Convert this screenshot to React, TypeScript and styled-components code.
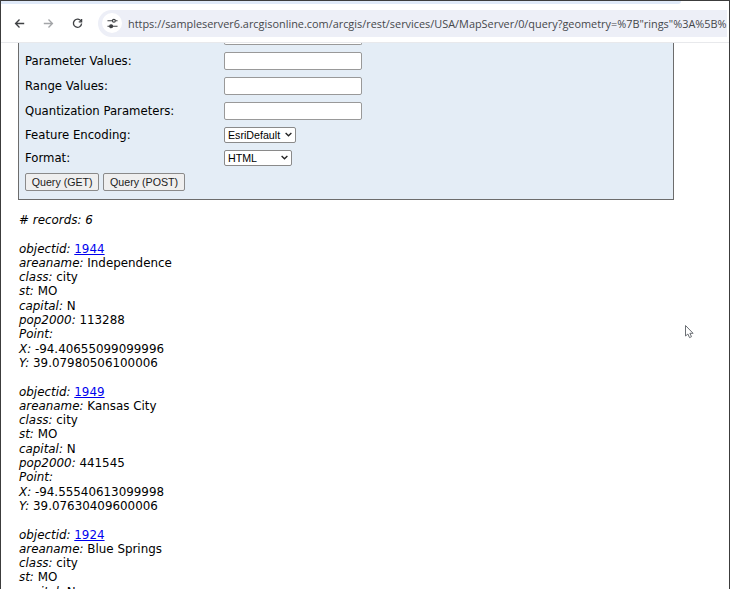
import React from "react";
import styled, { createGlobalStyle } from "styled-components";

const Global = createGlobalStyle`
  html, body { margin: 0; padding: 0; background: #fff; }
  #root { width: 730px; height: 589px; }
`;

const Frame = styled.div`
  width: 730px;
  height: 589px;
  box-sizing: border-box;
  border: 1px solid #3c3c3c;
  border-width: 1px 1px 0 1px;
  overflow: hidden;
  display: flex;
  flex-direction: column;
  background: #fff;
  position: relative;
`;

const TabEdge = styled.div`
  height: 3px;
  flex: none;
  background: #dfe9f8;
  margin-right: 48px;
  border-radius: 0 0 8px 0;
`;

const Toolbar = styled.div`
  height: 39px;
  flex: none;
  display: flex;
  align-items: center;
  background: #fff;
  border-bottom: 1px solid #e8e9ec;
  box-sizing: border-box;
  padding-left: 13px;
  gap: 18px;
`;

const NavButton = styled.div<{ $dim?: boolean }>`
  width: 11px;
  height: 11px;
  color: ${(p) => (p.$dim ? "#a3a5a8" : "#3f4144")};
  display: flex;
`;

const Omnibox = styled.div`
  margin-left: -3px;
  margin-right: 2px;
  flex: 1;
  height: 27px;
  min-width: 0;
  background: #edeff7;
  border-radius: 14px 0 0 14px;
  display: flex;
  align-items: center;
  padding-left: 4px;
  gap: 6px;
  overflow: hidden;
`;

const SiteChip = styled.div`
  width: 20px;
  height: 20px;
  flex: none;
  border-radius: 50%;
  background: #fff;
  display: flex;
  align-items: center;
  justify-content: center;
  color: #3f4144;
`;

const Url = styled.span`
  font: 10.9px "Open Sans", "Noto Sans", sans-serif;
  color: #45474b;
  white-space: nowrap;
`;

const Page = styled.div`
  flex: 1;
  min-height: 0;
  padding: 0 0 0 17px;
  font: 11.9px/14.3px "DejaVu Sans", Verdana, sans-serif;
  color: #000;
  overflow: hidden;
`;

const Panel = styled.div`
  width: 656px;
  height: 157px;
  box-sizing: border-box;
  background: #e4edf6;
  border: 1px solid #6c6c6c;
  border-top: 0;
  padding: 0 0 0 6px;
  display: grid;
  grid-template-columns: 199px 1fr;
  grid-template-rows: 5px 25px 25px 25px 23px 23px auto;
  align-items: center;
  font-size: 11.7px;
`;

const ClippedInput = styled.div`
  grid-column: 2;
  align-self: start;
  width: 138px;
  height: 2px;
  box-sizing: border-box;
  border: 1px solid #999;
  border-top: 0;
  border-radius: 0 0 2px 2px;
  background: #fff;
`;

const FieldLabel = styled.label`
  grid-column: 1;
  padding-top: 2px;
`;

const TextField = styled.div`
  width: 138px;
  height: 18px;
  box-sizing: border-box;
  border: 1px solid #999;
  border-radius: 2px;
  background: #fff;
`;

const Dropdown = styled.div<{ $w: number }>`
  width: ${(p) => p.$w}px;
  height: 16px;
  box-sizing: border-box;
  border: 1px solid #8a8a8a;
  border-radius: 2px;
  background: #fff;
  font: 10.67px/14px "Liberation Sans", Arial, sans-serif;
  padding: 0 3px;
  display: flex;
  align-items: center;
  justify-content: space-between;
`;

const Buttons = styled.div`
  grid-column: 1 / -1;
  display: flex;
  gap: 4px;
  padding: 4px 0 0;
  align-self: start;
`;

const QueryButton = styled.div`
  height: 18px;
  box-sizing: border-box;
  border: 1px solid #8a8a8a;
  border-radius: 2px;
  background: #efefef;
  font: 10.67px/16px "Liberation Sans", Arial, sans-serif;
  padding: 0 5.7px;
  color: #222;
`;

const Results = styled.div`
  padding-top: 13px;
  padding-left: 1px;
`;

const Count = styled.div`
  font-style: italic;
  margin-bottom: 14.3px;
`;

const Record = styled.div`
  margin-bottom: 14.3px;
`;

const Line = styled.div`
  white-space: nowrap;
`;

const Key = styled.i`
  font-style: italic;
`;

const IdLink = styled.a`
  color: #0000ee;
  text-decoration: underline;
`;

const Pointer = styled.svg`
  position: absolute;
  left: 684px;
  top: 324px;
`;

const Chevron = () => (
  <svg width="7" height="5" viewBox="0 0 8 5" fill="none" stroke="#222" strokeWidth="1.5">
    <path d="M0.7 0.7 4 4 7.3 0.7" />
  </svg>
);

type Rec = { id: string; area: string; pop: string; x: string; y: string };
const records: Rec[] = [
  { id: "1944", area: "Independence", pop: "113288", x: "-94.40655099099996", y: "39.07980506100006" },
  { id: "1949", area: "Kansas City", pop: "441545", x: "-94.55540613099998", y: "39.07630409600006" },
];

const RecordBlock = ({ r }: { r: Rec }) => (
  <Record>
    <Line><Key>objectid:</Key> <IdLink href="#">{r.id}</IdLink></Line>
    <Line><Key>areaname:</Key> {r.area}</Line>
    <Line><Key>class:</Key> city</Line>
    <Line><Key>st:</Key> MO</Line>
    <Line><Key>capital:</Key> N</Line>
    <Line><Key>pop2000:</Key> {r.pop}</Line>
    <Line><Key>Point:</Key></Line>
    <Line><Key>X:</Key> {r.x}</Line>
    <Line><Key>Y:</Key> {r.y}</Line>
  </Record>
);

export default function App() {
  return (
    <Frame>
      <Global />
      <TabEdge />
      <Toolbar>
        <NavButton>
          <svg width="11" height="11" viewBox="0 0 14 14" fill="none" stroke="currentColor" strokeWidth="1.7">
            <path d="M13 7H2M7 2 2 7l5 5" />
          </svg>
        </NavButton>
        <NavButton $dim>
          <svg width="11" height="11" viewBox="0 0 14 14" fill="none" stroke="currentColor" strokeWidth="1.7">
            <path d="M1 7h11M7 2l5 5-5 5" />
          </svg>
        </NavButton>
        <NavButton>
          <svg width="11" height="11" viewBox="0 0 14 14" fill="none" stroke="currentColor" strokeWidth="1.7">
            <path d="M11.6 4.2A5.2 5.2 0 1 0 12.2 7" />
            <path d="M12.2 1.4v3.6H8.6" />
          </svg>
        </NavButton>
        <Omnibox>
          <SiteChip>
            <svg width="11" height="11" viewBox="0 0 12 12" fill="none" stroke="currentColor" strokeWidth="1.3">
              <path d="M0.5 3h5M9.5 3h2M0.5 9h2M6.5 9h5" />
              <circle cx="7.5" cy="3" r="1.6" />
              <circle cx="4.5" cy="9" r="1.6" fill="currentColor" />
            </svg>
          </SiteChip>
          <Url>https://sampleserver6.arcgisonline.com/arcgis/rest/services/USA/MapServer/0/query?geometry=%7B"rings"%3A%5B%5</Url>
        </Omnibox>
      </Toolbar>
      <Page>
        <Panel>
          <ClippedInput />
          <FieldLabel>Parameter Values:</FieldLabel>
          <TextField />
          <FieldLabel>Range Values:</FieldLabel>
          <TextField />
          <FieldLabel>Quantization Parameters:</FieldLabel>
          <TextField />
          <FieldLabel>Feature Encoding:</FieldLabel>
          <Dropdown $w={72}>EsriDefault <Chevron /></Dropdown>
          <FieldLabel>Format:</FieldLabel>
          <Dropdown $w={68}>HTML <Chevron /></Dropdown>
          <Buttons>
            <QueryButton>Query (GET)</QueryButton>
            <QueryButton>Query (POST)</QueryButton>
          </Buttons>
        </Panel>
        <Results>
          <Count># records: 6</Count>
          {records.map((r) => <RecordBlock key={r.id} r={r} />)}
          <Line><Key>objectid:</Key> <IdLink href="#">1924</IdLink></Line>
          <Line><Key>areaname:</Key> Blue Springs</Line>
          <Line><Key>class:</Key> city</Line>
          <Line><Key>st:</Key> MO</Line>
          <Line><Key>capital:</Key> N</Line>
        </Results>
      </Page>
      <Pointer width="9" height="14" viewBox="0 0 9 14" fill="#fff" stroke="#6b6f74" strokeWidth="1">
        <path d="M0.5 0.5v10.5l2.4-2 1.6 3.6 2-.9-1.6-3.4h3.2z" />
      </Pointer>
    </Frame>
  );
}
